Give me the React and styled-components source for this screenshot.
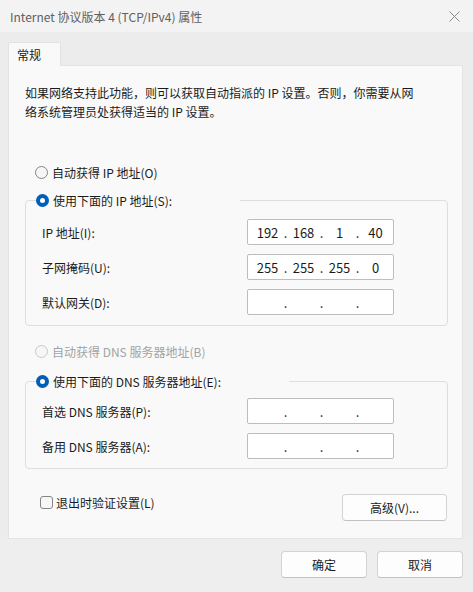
import React from "react";
import styled, { createGlobalStyle } from "styled-components";

const GlobalStyle = createGlobalStyle`
  html, body {
    margin: 0;
    padding: 0;
    background: #efefef;
  }
  body {
    font-family: "Noto Sans CJK SC", "Noto Sans", sans-serif;
    font-size: 12px;
    color: #1b1b1b;
  }
`;

const Window = styled.div`
  width: 474px;
  height: 592px;
  display: flex;
  flex-direction: column;
  background: #eeeeee;
  box-sizing: border-box;
  border-right: 1px solid #d8d8d8;
`;

const TitleBar = styled.div`
  height: 32px;
  flex-shrink: 0;
  display: flex;
  align-items: center;
  justify-content: space-between;
  padding: 0 13px 0 10px;
  background: #f3f3f3;
  color: #606060;
  font-size: 12px;
`;

const Body = styled.div`
  display: flex;
  flex-direction: column;
  padding: 10px 10px 0 8px;
  background: #ececec;
`;

const TabRow = styled.div`
  display: flex;
  height: 24px;
  margin-bottom: -1px;
  position: relative;
  z-index: 1;
`;

const Tab = styled.div`
  width: 53px;
  box-sizing: border-box;
  padding: 3px 0 0 8px;
  background: #f9f9f9;
  border: 1px solid #e2e2e2;
  border-bottom: none;
  border-radius: 2px 2px 0 0;
`;

const Panel = styled.div`
  width: 455px;
  box-sizing: border-box;
  background: #f9f9f9;
  border: 1px solid #e4e4e4;
  padding: 17px 14px 17px 16px;
  display: flex;
  flex-direction: column;
`;

const Description = styled.p`
  margin: 0;
  line-height: 19px;
  padding-right: 28px;
`;

const RadioRow = styled.label`
  display: flex;
  align-items: center;
  gap: 4px;
  height: 20px;
  margin-top: ${(p) => p.$top || 0}px;
  padding-left: ${(p) => (p.$inset ? 10 : 0)}px;
  color: ${(p) => (p.$disabled ? "#a3a3a3" : "#1b1b1b")};
`;

const RadioDot = styled.span`
  width: 13px;
  height: 13px;
  box-sizing: border-box;
  border-radius: 50%;
  flex-shrink: 0;
  background: ${(p) => (p.$checked ? "#ffffff" : "#f6f6f6")};
  border: ${(p) =>
    p.$checked
      ? "4px solid #005fb8"
      : p.$disabled
      ? "1px solid #c8c8c8"
      : "1px solid #858585"};
`;

const Group = styled.fieldset`
  margin: ${(p) => p.$top}px 0 0 0;
  padding: ${(p) => p.$padTop}px 0 ${(p) => p.$padBottom}px 16px;
  border: 1px solid #dedede;
  border-radius: 4px;
  display: flex;
  flex-direction: column;
  gap: 9px;
`;

const Legend = styled.legend`
  margin-left: -6px;
  padding: 0 68px 0 0;
`;

const FieldRow = styled.div`
  display: flex;
  align-items: center;
  justify-content: space-between;
  padding-right: 53px;
`;

const IpBox = styled.div`
  width: 147px;
  height: 26px;
  box-sizing: border-box;
  background: #ffffff;
  border: 1px solid #bdbdbd;
  border-radius: 2px;
  display: flex;
  align-items: center;
  padding-left: 4px;
  font-size: 13px;
  color: #1b1b1b;
`;

const Octet = styled.span`
  width: 31px;
  text-align: center;
`;

const Dot = styled.span`
  width: 5px;
  text-align: center;
`;

const BottomRow = styled.div`
  display: flex;
  justify-content: space-between;
  align-items: flex-start;
  margin-top: 25px;
  padding: 0 1px 0 15px;
`;

const CheckRow = styled.label`
  display: flex;
  align-items: center;
  gap: 3px;
  height: 17px;
`;

const CheckBox = styled.span`
  width: 13px;
  height: 13px;
  box-sizing: border-box;
  border: 1px solid #858585;
  border-radius: 3px;
  background: #f6f6f6;
`;

const Button = styled.button`
  width: ${(p) => p.$w || 86}px;
  height: 27px;
  box-sizing: border-box;
  background: #fdfdfd;
  border: 1px solid #d3d3d3;
  border-bottom-color: #c2c2c2;
  border-radius: 4px;
  font-family: inherit;
  font-size: 12px;
  color: #1b1b1b;
  padding: 0;
`;

const Footer = styled.div`
  display: flex;
  justify-content: flex-end;
  gap: 10px;
  padding: 12px 10px 0 0;
  background: #eeeeee;
  flex: 1;
`;

const IpField = ({ value }) => {
  const parts = value ? value.split(".") : ["", "", "", ""];
  return (
    <IpBox>
      {parts.map((p, i) => (
        <React.Fragment key={i}>
          {i > 0 && <Dot>.</Dot>}
          <Octet>{p}</Octet>
        </React.Fragment>
      ))}
    </IpBox>
  );
};

const Field = ({ label, value }) => (
  <FieldRow>
    <span>{label}</span>
    <IpField value={value} />
  </FieldRow>
);

const App = () => {
  return (
    <>
      <GlobalStyle />
      <Window>
        <TitleBar>
          <span>Internet 协议版本 4 (TCP/IPv4) 属性</span>
          <svg width="11" height="11" viewBox="0 0 11 11">
            <path d="M0.5 0.5 L10.5 10.5 M10.5 0.5 L0.5 10.5" stroke="#8a8a8a" strokeWidth="1" />
          </svg>
        </TitleBar>
        <Body>
          <TabRow>
            <Tab>常规</Tab>
          </TabRow>
          <Panel>
            <Description>
              如果网络支持此功能，则可以获取自动指派的 IP 设置。否则，你需要从网络系统管理员处获得适当的 IP 设置。
            </Description>

            <RadioRow $top={41} $inset>
              <RadioDot />
              自动获得 IP 地址(O)
            </RadioRow>

            <Group $top={8} $padTop={9} $padBottom={10}>
              <Legend>
                <RadioRow>
                  <RadioDot $checked />
                  使用下面的 IP 地址(S):
                </RadioRow>
              </Legend>
              <Field label="IP 地址(I):" value="192.168.1.40" />
              <Field label="子网掩码(U):" value="255.255.255.0" />
              <Field label="默认网关(D):" />
            </Group>

            <RadioRow $top={15} $inset $disabled>
              <RadioDot $disabled />
              自动获得 DNS 服务器地址(B)
            </RadioRow>

            <Group $top={10} $padTop={7} $padBottom={9}>
              <Legend>
                <RadioRow>
                  <RadioDot $checked />
                  使用下面的 DNS 服务器地址(E):
                </RadioRow>
              </Legend>
              <Field label="首选 DNS 服务器(P):" />
              <Field label="备用 DNS 服务器(A):" />
            </Group>

            <BottomRow>
              <CheckRow>
                <CheckBox />
                退出时验证设置(L)
              </CheckRow>
              <Button $w={105}>高级(V)...</Button>
            </BottomRow>
          </Panel>
        </Body>
        <Footer>
          <Button>确定</Button>
          <Button>取消</Button>
        </Footer>
      </Window>
    </>
  );
};

export default App;
